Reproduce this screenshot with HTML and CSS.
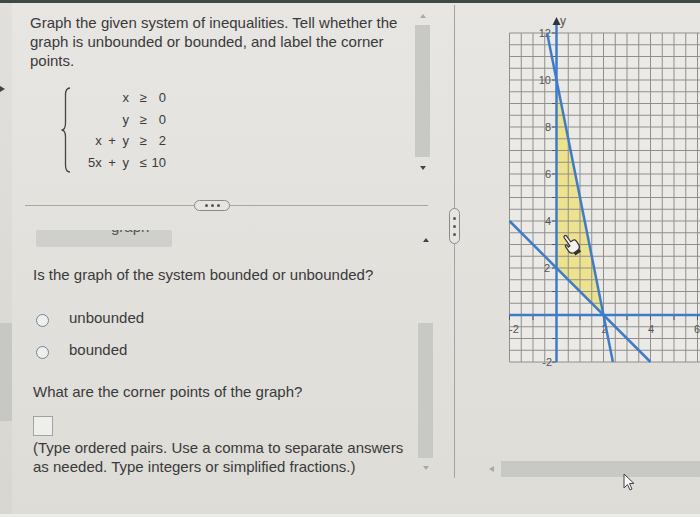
FILE: index.html
```html
<!DOCTYPE html>
<html>
<head>
<meta charset="utf-8">
<link rel="stylesheet" href="styles.css">
</head>
<body>
<div class="topbar"></div>
<div class="main">
  <div class="gutter"><div class="ltri"></div><div class="lblock"></div></div>
  <div class="left">
    <div class="pane pane-top">
      <div class="content content-top">
        <p class="title">Graph the given system of inequalities. Tell whether the graph is unbounded or bounded, and label the corner points.</p>
        <div class="system">
          <svg class="brace" width="12" height="86" viewBox="0 0 12 86"><path d="M10 1 Q5.5 1 5.5 8 L5.5 36 Q5.5 43 1.5 43 Q5.5 43 5.5 50 L5.5 78 Q5.5 85 10 85" fill="none" stroke="#444" stroke-width="1.3"/></svg>
          <span class="lhs">x</span><span class="rel">≥</span><span class="rhs">0</span>
          <span class="lhs">y</span><span class="rel">≥</span><span class="rhs">0</span>
          <span class="lhs">x + y</span><span class="rel">≥</span><span class="rhs">2</span>
          <span class="lhs">5x + y</span><span class="rel">≤</span><span class="rhs">10</span>
        </div>
      </div>
      <div class="vscroll vs-top">
        <span class="arr-up light"></span>
        <span class="thumb"></span>
        <span class="arr-down"></span>
      </div>
    </div>
    <div class="sep">
      <span class="sep-line first"></span>
      <span class="pill"><i></i><i></i><i></i></span>
      <span class="sep-line"></span>
    </div>
    <div class="pane pane-bottom">
      <div class="content content-bottom">
        <div class="graphbtn"><span>graph</span></div>
        <p class="q">Is the graph of the system bounded or unbounded?</p>
        <div class="radio r1"><span class="circle"></span><span>unbounded</span></div>
        <div class="radio r2"><span class="circle"></span><span>bounded</span></div>
        <p class="q q2">What are the corner points of the graph?</p>
        <div class="answer"></div>
        <p class="note">(Type ordered pairs. Use a comma to separate answers as needed. Type integers or simplified fractions.)</p>
      </div>
      <div class="vscroll vs-bottom">
        <span class="arr-up"></span>
        <span class="thumb"></span>
        <span class="arr-down light"></span>
      </div>
    </div>
  </div>
  <div class="divider">
    <span class="dline d1"></span>
    <span class="vpill"><i></i><i></i><i></i></span>
    <span class="dline d2"></span>
  </div>
  <div class="right">
    <svg class="graph" width="240" height="455" viewBox="460 3 240 455">
      <rect x="509.5" y="33" width="200" height="329" fill="#ebeae6"/>
      <polygon points="556.5,268 556.5,80 603.5,315" fill="#ede28e"/>
      <path d="M509.5 33V362M521.25 33V362M533 33V362M544.75 33V362M556.5 33V362M568.25 33V362M580 33V362M591.75 33V362M603.5 33V362M615.25 33V362M627 33V362M638.75 33V362M650.5 33V362M662.25 33V362M674 33V362M685.75 33V362M697.5 33V362M709.25 33V362
      M509.5 33H710M509.5 44.75H710M509.5 56.5H710M509.5 68.25H710M509.5 80H710M509.5 91.75H710M509.5 103.5H710M509.5 115.25H710M509.5 127H710M509.5 138.75H710M509.5 150.5H710M509.5 162.25H710M509.5 174H710M509.5 185.75H710M509.5 197.5H710M509.5 209.25H710M509.5 221H710M509.5 232.75H710M509.5 244.5H710M509.5 256.25H710M509.5 268H710M509.5 279.75H710M509.5 291.5H710M509.5 303.25H710M509.5 315H710M509.5 326.75H710M509.5 338.5H710M509.5 350.25H710M509.5 362H710" fill="none" stroke="#8f8f8d" stroke-width="1"/>
      <path d="M552 33H556.5M552 56.5H556.5M552 80H556.5M552 103.5H556.5M552 127H556.5M552 150.5H556.5M552 174H556.5M552 197.5H556.5M552 221H556.5M552 244.5H556.5M552 268H556.5M552 291.5H556.5M552 338.5H556.5M552 362H556.5
      M509.5 315V320M533 315V320M580 315V320M603.5 315V320M627 315V320M650.5 315V320M674 315V320M697.5 315V320" fill="none" stroke="#555" stroke-width="1"/>
      <g fill="#555" font-family="Liberation Sans, Arial, sans-serif" font-size="11">
        <text x="551" y="37" text-anchor="end">12</text>
        <text x="551" y="84" text-anchor="end">10</text>
        <text x="551" y="131" text-anchor="end">8</text>
        <text x="551" y="178" text-anchor="end">6</text>
        <text x="551" y="225" text-anchor="end">4</text>
        <text x="550" y="272" text-anchor="end">2</text>
        <text x="552" y="366" text-anchor="end">-2</text>
        <text x="509" y="333">-2</text>
        <text x="604.5" y="333" text-anchor="middle">2</text>
        <text x="651" y="333" text-anchor="middle">4</text>
        <text x="697" y="333" text-anchor="middle">6</text>
        <text x="560" y="25" font-size="12">y</text>
      </g>
      <g fill="none" stroke="#3f7bc6" stroke-width="2.5">
        <path d="M556.5 362V24"/>
        <path d="M509.5 315H700"/>
        <path d="M509.5 221L650.5 362"/>
        <path d="M547.1 33L612.9 362"/>
      </g>
      <polygon points="552.5,25 556.5,17 560.5,25" fill="#333"/>
      <g transform="translate(571 244) rotate(-35)">
        <path d="M-2 -9 C-2 -11 1 -11 1 -9 V-2 H3 C5 -2 6 -1 6 1 V4 C6 7 4 9 1 9 H-2 C-4 9 -6 7 -6 5 V-1 C-6 -2.5 -4 -2.5 -4 -1 V1 H-2 Z" fill="#f3f2ee" stroke="#333" stroke-width="1.2"/>
        <rect x="-3" y="9" width="7" height="3" fill="#333"/>
      </g>
    </svg>
    <div class="hscroll"><span class="arr-left"></span><span class="hthumb"></span></div>
  </div>
</div>
<div class="bottombar"></div>
<svg class="cursor" width="14" height="19" viewBox="0 0 14 19"><path d="M1 1 L1 15 L4.5 11.5 L7 17 L9 16 L6.5 10.5 L11 10.5 Z" fill="#fafafa" stroke="#444" stroke-width="1"/></svg>
</body>
</html>
```

FILE: styles.css
```css
* { box-sizing: border-box; }
body {
  margin: 0;
  width: 700px;
  height: 517px;
  overflow: hidden;
  position: relative;
  background: linear-gradient(#e7e6e2, #dddcd7);
  font-family: "Liberation Sans", Arial, sans-serif;
  color: #3a3a3a;
}
p { margin: 0; }
.topbar { height: 3px; background: #3e4a45; }
.bottombar { height: 3px; background: #ecece8; }
.main { display: flex; height: 511px; }

.gutter { width: 12px; display: flex; flex-direction: column; background: rgba(0,0,0,0.025); }
.ltri { margin-top: 83px; width: 0; height: 0; border-top: 3px solid transparent; border-bottom: 3px solid transparent; border-left: 5px solid #444; }
.lblock { margin-top: 231px; height: 98px; width: 12px; background: #c7c7c4; }

.left { width: 417px; display: flex; flex-direction: column; }
.pane { display: flex; }
.pane-top { height: 193px; }
.content { flex: 1; }
.content-top { padding: 10px 0 0 18px; }
.title { font-size: 15px; line-height: 19px; width: 385px; }

.system {
  margin-top: 17px;
  margin-left: 30px;
  display: grid;
  grid-template-columns: 12px 57px 22px 15px;
  grid-auto-rows: 21.5px;
  font-size: 13px;
  line-height: 21.5px;
  color: #3a3a3a;
}
.brace { grid-row: 1 / span 4; grid-column: 1; margin-top: -0.5px; }
.lhs { grid-column: 2; text-align: right; word-spacing: 3px; }
.rel { grid-column: 3; text-align: center; padding-left: 6px; }
.rhs { grid-column: 4; text-align: right; }

.vscroll { width: 15px; margin-right: 1px; display: flex; flex-direction: column; align-items: center; }
.thumb { width: 15px; background: #c8c8c5; }
.arr-up { width: 0; height: 0; border-left: 3.5px solid transparent; border-right: 3.5px solid transparent; border-bottom: 4px solid #444; }
.arr-down { width: 0; height: 0; border-left: 3.5px solid transparent; border-right: 3.5px solid transparent; border-top: 4px solid #444; }
.arr-up.light { border-bottom-color: #a9a9a7; }
.arr-down.light { border-top-color: #a9a9a7; }
.vs-top .arr-up { margin-top: 11px; }
.vs-top .thumb { margin-top: 7px; height: 132px; }
.vs-top .arr-down { margin-top: 9px; }
.vs-bottom .arr-up { margin-top: 24px; }
.vs-bottom .thumb { margin-top: 81px; height: 135px; }
.vs-bottom .arr-down { margin-top: 8px; }

.sep { height: 18px; display: flex; align-items: center; padding-left: 13px; padding-right: 1px; }
.sep-line { flex: 1; height: 1px; background: #a6a6a3; }
.sep-line.first { flex: none; width: 169px; }
.pill { width: 36px; height: 11px; border: 1px solid #8a8a88; border-radius: 6px; display: flex; align-items: center; justify-content: center; gap: 3px; background: #e6e5e1; }
.pill i, .vpill i { display: block; width: 3px; height: 3px; border-radius: 50%; background: #555; }

.pane-bottom { flex: 1; }
.content-bottom { padding-left: 21px; }
.graphbtn { margin-top: 16px; margin-left: 3px; width: 136px; height: 17px; background: #cfcfcc; overflow: hidden; padding-left: 75px; border-radius: 2px; }
.graphbtn span { display: block; font-size: 15px; line-height: 15px; margin-top: -11px; color: #555; }
.q { font-size: 15px; line-height: 20px; margin-top: 18px; }
.radio { display: flex; align-items: center; font-size: 15px; line-height: 20px; height: 20px; }
.r1 { margin-top: 23px; }
.r2 { margin-top: 12px; }
.circle { width: 13px; height: 13px; border: 1.6px solid #74859a; border-radius: 50%; margin-left: 3px; margin-right: 20px; margin-top: 4px; background: #eeeeec; }
.q2 { margin-top: 22px; }
.answer { margin-top: 14px; width: 20px; height: 20px; border: 1px solid #a2a2a0; background: #eeeeeb; }
.note { font-size: 15px; line-height: 19px; margin-top: 2px; width: 385px; }

.divider { width: 12px; margin-left: 19px; display: flex; flex-direction: column; align-items: center; }
.dline { width: 1px; background: #a3a3a1; }
.d1 { margin-top: 2px; height: 203px; }
.d2 { height: 234px; }
.vpill { width: 11px; height: 36px; border: 1.5px solid #8b8b89; border-radius: 6px; background: #e6e5e1; display: flex; flex-direction: column; align-items: center; justify-content: center; gap: 5px; }

.right { flex: 1; display: flex; flex-direction: column; }
.graph { display: block; }
.hscroll { margin-top: 3px; height: 16px; display: flex; align-items: center; }
.arr-left { margin-left: 29px; width: 0; height: 0; border-top: 3.5px solid transparent; border-bottom: 3.5px solid transparent; border-right: 5px solid #a9a9a7; }
.hthumb { margin-left: 7px; flex: 1; height: 16px; background: #c8c8c5; }

.cursor { position: absolute; left: 623px; top: 473px; }
```
